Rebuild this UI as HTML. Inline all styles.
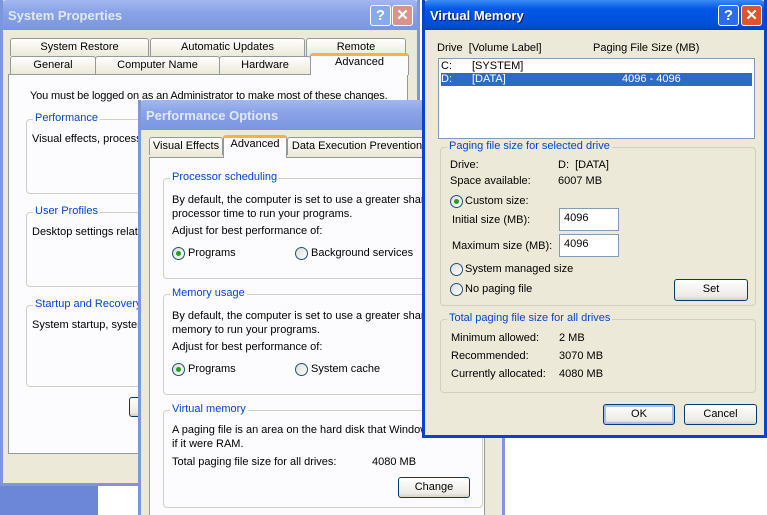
<!DOCTYPE html>
<html style="overflow:hidden;width:767px;height:515px"><head><style>
*{box-sizing:border-box;margin:0;padding:0}
body{width:767px;height:515px;position:relative;overflow:hidden;background:#fff;font-family:"Liberation Sans",sans-serif;font-size:11px;color:#000}
.a{position:absolute}
.win{position:absolute;background:#ece9d8;border:3px solid #7d97df;border-top:none;overflow:hidden}
.ttl{position:absolute;left:-3px;right:-3px;top:0;height:30px;background:linear-gradient(#a3b8f0,#8aa3e8 40%,#7b96e0);border-radius:7px 7px 0 0;color:#e0e8f8;font-weight:bold;font-size:13px;padding:8px 0 0 8px}
.act .ttl{background:linear-gradient(#3d8bf5,#0058e6 30%,#0050d8 80%,#0040c0);color:#fff;text-shadow:1px 1px #0a1e6e}
.btn{position:absolute;width:21px;height:21px;border:1px solid #fff;border-radius:3px;color:#fff;font-weight:bold;text-align:center;font-size:15px;line-height:19px}
.tab{position:absolute;height:18px;background:linear-gradient(#fff,#ece9d8);border:1px solid #919b9c;border-bottom:none;border-radius:3px 3px 0 0;text-align:center;padding-top:2px}
.sel{background:#fcfcfe;border-top:3px solid #f7b33d;z-index:2;padding-top:0}
.panel{position:absolute;background:#fcfcfe;border:1px solid #919b9c}
.grp{position:absolute;border:1px solid #d0d0bf;border-radius:4px}
.gl{position:absolute;top:-8px;left:6px;background:#fcfcfe;color:#0046d5;padding:0 2px}
.vm .gl{background:#ece9d8}
.pb{position:absolute;border:1px solid #003c74;border-radius:3px;background:linear-gradient(#fff,#ecebe6 80%,#d6d0c5);text-align:center;line-height:18px}
.r{position:absolute;width:13px;height:13px;border:1px solid #1c5180;border-radius:50%;background:linear-gradient(135deg,#dcdcd6,#fff)}
.r.on::after{content:"";position:absolute;left:3px;top:3px;width:5px;height:5px;border-radius:50%;background:#21a121}
.in{position:absolute;background:#fff;border:1px solid #7f9db9;padding:3px 4px}
</style></head><body>
<div class="a" style="left:0;top:485px;width:98px;height:30px;background:#6c86d8"></div>

<!-- System Properties -->
<div class="win" style="left:0;top:0;width:420px;height:486px">
<div class="ttl" style="top:0">System Properties</div>
<div class="btn" style="left:367px;top:5px;background:#8aa8ec">?</div>
<div class="btn" style="left:389px;top:5px;background:#d8948a">✕</div>
<div class="tab" style="left:7px;top:38px;width:139px">System Restore</div>
<div class="tab" style="left:147px;top:38px;width:155px">Automatic Updates</div>
<div class="tab" style="left:303px;top:38px;width:100px">Remote</div>
<div class="tab" style="left:7px;top:56px;width:86px">General</div>
<div class="tab" style="left:92px;top:56px;width:125px">Computer Name</div>
<div class="tab" style="left:216px;top:56px;width:92px">Hardware</div>
<div class="tab sel" style="left:307px;top:53px;width:99px;height:22px">Advanced</div>
<div class="panel" style="left:5px;top:74px;width:400px;height:380px">
<div class="a" style="left:21px;top:15px;white-space:nowrap;letter-spacing:-0.15px">You must be logged on as an Administrator to make most of these changes.</div>
<div class="grp" style="left:17px;top:44px;width:380px;height:75px"><span class="gl">Performance</span><div class="a" style="left:5px;top:13px">Visual effects, processor</div></div>
<div class="grp" style="left:17px;top:137px;width:380px;height:75px"><span class="gl">User Profiles</span><div class="a" style="left:5px;top:13px">Desktop settings related</div></div>
<div class="grp" style="left:17px;top:230px;width:380px;height:82px"><span class="gl">Startup and Recovery</span><div class="a" style="left:5px;top:13px">System startup, system</div></div>
<div class="pb" style="left:120px;top:322px;width:60px;height:20px"></div>
</div>
</div>

<!-- Performance Options -->
<div class="win" style="left:138px;top:100px;width:367px;height:415px;border-bottom:none">
<div class="ttl">Performance Options</div>
<div class="tab" style="left:8px;top:37px;width:74px">Visual Effects</div>
<div class="tab sel" style="left:82px;top:35px;width:64px;height:23px">Advanced</div>
<div class="tab" style="left:146px;top:37px;width:140px">Data Execution Prevention</div>
<div class="panel" style="left:8px;top:57px;width:336px;height:370px">
<div class="grp" style="left:13px;top:20px;width:330px;height:101px"><span class="gl">Processor scheduling</span>
<div class="a" style="left:8px;top:14px;white-space:nowrap;line-height:14px">By default, the computer is set to use a greater share of<br>processor time to run your programs.</div>
<div class="a" style="left:8px;top:46px">Adjust for best performance of:</div>
<div class="r on" style="left:8px;top:68px"></div><div class="a" style="left:24px;top:68px">Programs</div>
<div class="r" style="left:131px;top:68px"></div><div class="a" style="left:147px;top:68px">Background services</div></div>
<div class="grp" style="left:13px;top:136px;width:330px;height:101px"><span class="gl">Memory usage</span>
<div class="a" style="left:8px;top:14px;white-space:nowrap;line-height:14px">By default, the computer is set to use a greater share of<br>memory to run your programs.</div>
<div class="a" style="left:8px;top:46px">Adjust for best performance of:</div>
<div class="r on" style="left:8px;top:68px"></div><div class="a" style="left:24px;top:68px">Programs</div>
<div class="r" style="left:131px;top:68px"></div><div class="a" style="left:147px;top:68px">System cache</div></div>
<div class="grp" style="left:13px;top:252px;width:320px;height:98px"><span class="gl">Virtual memory</span>
<div class="a" style="left:8px;top:12px;white-space:nowrap;line-height:14px">A paging file is an area on the hard disk that Windows uses as<br>if it were RAM.</div>
<div class="a" style="left:8px;top:45px">Total paging file size for all drives:</div>
<div class="a" style="left:208px;top:45px">4080 MB</div>
<div class="pb" style="left:234px;top:66px;width:72px;height:21px">Change</div></div>
</div>
</div>

<!-- Virtual Memory -->
<div class="win act vm" style="left:422px;top:0;width:345px;height:438px;border-color:#0842d0">
<div class="ttl">Virtual Memory</div>
<div class="btn" style="left:293px;top:5px;background:#2a6cf0">?</div>
<div class="btn" style="left:316px;top:5px;background:#e0542c">✕</div>
<div class="a" style="left:12px;top:42px">Drive&nbsp; [Volume Label]</div>
<div class="a" style="left:168px;top:42px">Paging File Size (MB)</div>
<div class="a" style="left:13px;top:58px;width:317px;height:81px;background:#fff;border:1px solid #7f9db9">
<div class="a" style="left:2px;top:1px">C:</div><div class="a" style="left:33px;top:1px">[SYSTEM]</div>
<div class="a" style="left:2px;top:14px;width:311px;height:13px;background:#316ac5;color:#fff"><span class="a" style="left:0;top:0">D:</span><span class="a" style="left:31px;top:0">[DATA]</span><span class="a" style="left:181px;top:0">4096 - 4096</span></div>
</div>
<div class="grp" style="left:15px;top:147px;width:316px;height:159px"><span class="gl">Paging file size for selected drive</span>
<div class="a" style="left:9px;top:11px">Drive:</div><div class="a" style="left:117px;top:11px">D:&nbsp; [DATA]</div>
<div class="a" style="left:9px;top:27px">Space available:</div><div class="a" style="left:117px;top:27px">6007 MB</div>
<div class="r on" style="left:9px;top:47px"></div><div class="a" style="left:24px;top:47px">Custom size:</div>
<div class="a" style="left:11px;top:66px">Initial size (MB):</div><div class="in" style="left:118px;top:60px;width:60px;height:23px">4096</div>
<div class="a" style="left:11px;top:92px">Maximum size (MB):</div><div class="in" style="left:118px;top:86px;width:60px;height:23px">4096</div>
<div class="r" style="left:9px;top:115px"></div><div class="a" style="left:24px;top:115px">System managed size</div>
<div class="r" style="left:9px;top:135px"></div><div class="a" style="left:24px;top:135px">No paging file</div>
<div class="pb" style="left:233px;top:131px;width:74px;height:22px">Set</div></div>
<div class="grp" style="left:15px;top:319px;width:316px;height:74px"><span class="gl">Total paging file size for all drives</span>
<div class="a" style="left:10px;top:12px">Minimum allowed:</div><div class="a" style="left:118px;top:12px">2 MB</div>
<div class="a" style="left:10px;top:30px">Recommended:</div><div class="a" style="left:118px;top:30px">3070 MB</div>
<div class="a" style="left:10px;top:48px">Currently allocated:</div><div class="a" style="left:118px;top:48px">4080 MB</div></div>
<div class="pb" style="left:178px;top:404px;width:72px;height:21px;box-shadow:inset 0 0 0 2px #a8c0f0">OK</div>
<div class="pb" style="left:259px;top:404px;width:73px;height:21px">Cancel</div>
</div>
</body></html>
